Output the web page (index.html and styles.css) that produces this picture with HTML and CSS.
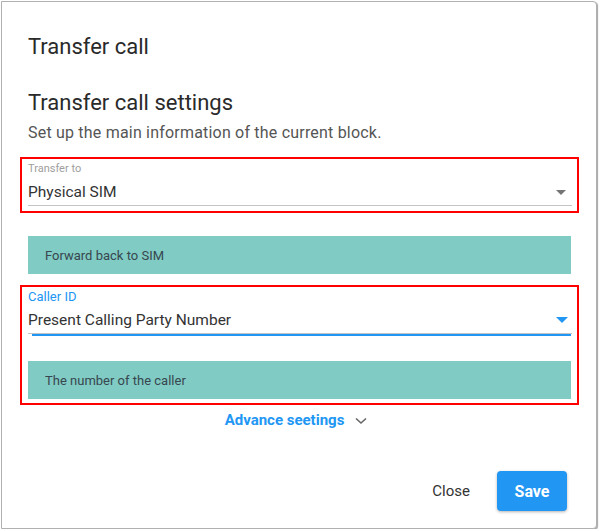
FILE: index.html
```html
<!DOCTYPE html>
<html>
<head>
    <title>Transfer call</title>
    <link rel="stylesheet" href="styles.css">
</head>
<body>
    <div class="dialog">
        <h2 class="dialog-title">Transfer call</h2>

        <h3 class="section-title">Transfer call settings</h3>
        <p class="section-desc">Set up the main information of the current block.</p>

        <div class="marked">
            <div class="select">
                <label class="select-label">Transfer to</label>
                <div class="select-value">
                    <span>Physical SIM</span>
                    <span class="arrow"></span>
                </div>
            </div>
        </div>

        <div class="hint hint-first">Forward back to SIM</div>

        <div class="marked marked-second">
            <div class="select focused">
                <label class="select-label">Caller ID</label>
                <div class="select-value">
                    <span>Present Calling Party Number</span>
                    <span class="arrow"></span>
                </div>
            </div>
            <div class="hint hint-second">The number of the caller</div>
        </div>

        <div class="advance">
            <span>Advance seetings</span>
            <svg width="12" height="8" viewBox="0 0 12 8"><path d="M1 1.5 L6 6 L11 1.5" fill="none" stroke="#666" stroke-width="1.6"/></svg>
        </div>

        <div class="actions">
            <button class="btn-text">Close</button>
            <button class="btn-primary">Save</button>
        </div>
    </div>
</body>
</html>
```

FILE: styles.css
```css
body {
    margin: 0;
    background: #fff;
    font-family: Roboto, "Liberation Sans", sans-serif;
    color: #212121;
}
.dialog {
    box-sizing: border-box;
    margin: 1px 0 0 1px;
    width: 596px;
    height: 528px;
    padding: 33px 24px 0 26px;
    border: 1px solid #b0b0b0;
    border-radius: 0 4px 4px 0;
    box-shadow: 1px 1px 1px rgba(0,0,0,0.35);
    background: #fff;
}
.dialog-title {
    margin: 0;
    font-size: 22px;
    line-height: 24px;
    font-weight: 400;
    color: #2a2a2a;
}
.section-title {
    margin: 32px 0 0;
    font-size: 22px;
    line-height: 24px;
    font-weight: 400;
    color: #2a2a2a;
}
.section-desc {
    margin: 8px 0 0;
    font-size: 16px;
    line-height: 20px;
    letter-spacing: 0.2px;
    color: #555;
}
.marked {
    margin: 14px -7px 0 -8px;
    padding: 3px 5px 5px 6px;
    border: 2px solid #f00;
}
.marked-second {
    margin-top: 11px;
    padding-top: 2px;
    padding-bottom: 4px;
}
.select-label {
    display: block;
    font-size: 11px;
    line-height: 14px;
    color: #9e9e9e;
}
.select-value {
    position: relative;
    display: flex;
    justify-content: space-between;
    align-items: center;
    margin-top: 4px;
    height: 24px;
    padding-bottom: 1px;
    border-bottom: 1px solid #c4c4c4;
    font-size: 15.5px;
    color: #333;
}
.arrow {
    width: 0;
    height: 0;
    margin-right: 6px;
    border-left: 5px solid transparent;
    border-right: 5px solid transparent;
    border-top: 5px solid #757575;
}
.focused .select-label {
    font-size: 13px;
    line-height: 16px;
    color: #2196f3;
}
.focused .select-value {
    margin-top: 3px;
}
.focused .arrow {
    border-left-width: 6px;
    border-right-width: 6px;
    border-top: 6px solid #2196f3;
    margin-right: 4px;
}
.focused .select-value::after {
    content: "";
    position: absolute;
    left: 4px;
    right: 1px;
    bottom: -3px;
    height: 2px;
    background: #2196f3;
}
.hint {
    display: flex;
    align-items: center;
    height: 38px;
    padding-left: 17px;
    background: #80cbc4;
    font-size: 13px;
    color: #37474f;
}
.hint-first {
    margin: 23px 1px 0 0;
}
.hint-second {
    margin: 27px 1px 0 0;
}
.advance {
    display: flex;
    justify-content: center;
    align-items: center;
    gap: 11px;
    margin: 5px 8px 0 0;
    font-size: 15px;
    line-height: 20px;
    font-weight: 700;
    color: #2196f3;
}
.advance svg {
    margin-top: 2px;
}
.actions {
    display: flex;
    justify-content: flex-end;
    align-items: center;
    gap: 11px;
    margin: 41px 5px 0 0;
}
button {
    font-family: Roboto, "Liberation Sans", sans-serif;
    font-size: 15px;
    height: 40px;
    border: none;
    border-radius: 4px;
    cursor: pointer;
}
.btn-text {
    padding: 0 16px;
    background: transparent;
    color: #333;
}
.btn-primary {
    width: 70px;
    background: #2196f3;
    color: #fff;
    font-size: 16px;
    font-weight: 700;
    box-shadow: 0 1px 3px rgba(0,0,0,0.3);
}
```
